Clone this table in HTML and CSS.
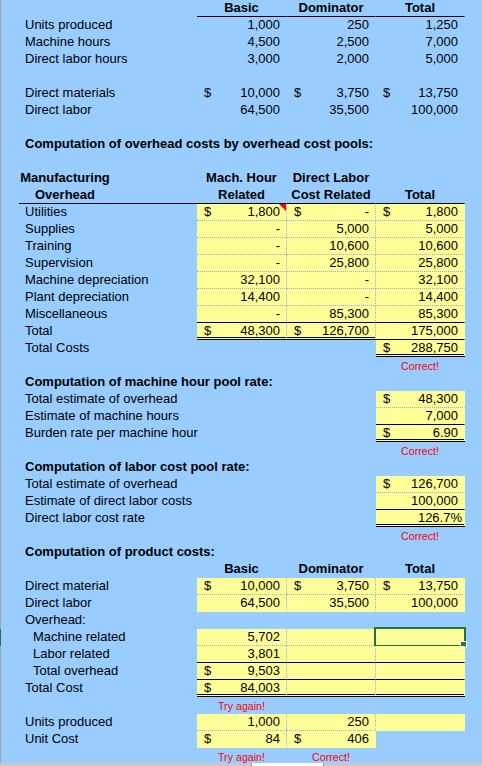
FILE: index.html
```html
<!DOCTYPE html>
<html>
<head>
<meta charset="utf-8">
<link rel="stylesheet" href="styles.css">
</head>
<body>
<div class="sheet">
  <div class="r"><div class="sp"></div><div class="lb"></div><div class="c w90 hd sb">Basic</div><div class="c hd sb">Dominator</div><div class="c hd sb">Total</div></div>
  <div class="r"><div class="sp"></div><div class="lb">Units produced</div><div class="c w90 num"><span>1,000</span></div><div class="c num"><span>250</span></div><div class="c num"><span>1,250</span></div></div>
  <div class="r"><div class="sp"></div><div class="lb">Machine hours</div><div class="c w90 num"><span>4,500</span></div><div class="c num"><span>2,500</span></div><div class="c num"><span>7,000</span></div></div>
  <div class="r"><div class="sp"></div><div class="lb">Direct labor hours</div><div class="c w90 num"><span>3,000</span></div><div class="c num"><span>2,000</span></div><div class="c num"><span>5,000</span></div></div>
  <div class="r"></div>
  <div class="r"><div class="sp"></div><div class="lb">Direct materials</div><div class="c w90"><span>$</span><span>10,000</span></div><div class="c"><span>$</span><span>3,750</span></div><div class="c"><span>$</span><span>13,750</span></div></div>
  <div class="r"><div class="sp"></div><div class="lb">Direct labor</div><div class="c w90 num"><span>64,500</span></div><div class="c num"><span>35,500</span></div><div class="c num"><span>100,000</span></div></div>
  <div class="r"></div>
  <div class="r"><div class="sp"></div><div class="lb bold">Computation of overhead costs by overhead cost pools:</div></div>
  <div class="r"></div>
  <div class="r"><div class="sp"></div><div class="lb nopad"><span class="mh">Manufacturing</span></div><div class="c w90 hd">Mach. Hour</div><div class="c hd">Direct Labor</div><div class="c hd"></div></div>
  <div class="r"><div class="sp"></div><div class="lb nopad sb"><span class="mh">Overhead</span></div><div class="c w90 hd sb">Related</div><div class="c hd sb">Cost Related</div><div class="c hd sb">Total</div></div>
  <div class="r"><div class="sp"></div><div class="lb">Utilities</div><div class="c w90 y dh dv note"><span>$</span><span>1,800</span></div><div class="c y dh dv"><span>$</span><span>-</span></div><div class="c y dh"><span>$</span><span>1,800</span></div></div>
  <div class="r"><div class="sp"></div><div class="lb">Supplies</div><div class="c w90 y dh dv num"><span>-</span></div><div class="c y dh dv num"><span>5,000</span></div><div class="c y dh num"><span>5,000</span></div></div>
  <div class="r"><div class="sp"></div><div class="lb">Training</div><div class="c w90 y dh dv num"><span>-</span></div><div class="c y dh dv num"><span>10,600</span></div><div class="c y dh num"><span>10,600</span></div></div>
  <div class="r"><div class="sp"></div><div class="lb">Supervision</div><div class="c w90 y dh dv num"><span>-</span></div><div class="c y dh dv num"><span>25,800</span></div><div class="c y dh num"><span>25,800</span></div></div>
  <div class="r"><div class="sp"></div><div class="lb">Machine depreciation</div><div class="c w90 y dh dv num"><span>32,100</span></div><div class="c y dh dv num"><span>-</span></div><div class="c y dh num"><span>32,100</span></div></div>
  <div class="r"><div class="sp"></div><div class="lb">Plant depreciation</div><div class="c w90 y dh dv num"><span>14,400</span></div><div class="c y dh dv num"><span>-</span></div><div class="c y dh num"><span>14,400</span></div></div>
  <div class="r"><div class="sp"></div><div class="lb">Miscellaneous</div><div class="c w90 y sb dv num"><span>-</span></div><div class="c y sb dv num"><span>85,300</span></div><div class="c y sb num"><span>85,300</span></div></div>
  <div class="r"><div class="sp"></div><div class="lb">Total</div><div class="c w90 y db dv"><span>$</span><span>48,300</span></div><div class="c y db dv"><span>$</span><span>126,700</span></div><div class="c y sb num"><span>175,000</span></div></div>
  <div class="r"><div class="sp"></div><div class="lb">Total Costs</div><div class="c w90"></div><div class="c"></div><div class="c y db"><span>$</span><span>288,750</span></div></div>
  <div class="r"><div class="sp"></div><div class="lb"></div><div class="c w90"></div><div class="c"></div><div class="c msg ok">Correct!</div></div>
  <div class="r"><div class="sp"></div><div class="lb bold">Computation of machine hour pool rate:</div></div>
  <div class="r"><div class="sp"></div><div class="lb">Total estimate of overhead</div><div class="c w90"></div><div class="c"></div><div class="c y dh"><span>$</span><span>48,300</span></div></div>
  <div class="r"><div class="sp"></div><div class="lb">Estimate of machine hours</div><div class="c w90"></div><div class="c"></div><div class="c y sb num"><span>7,000</span></div></div>
  <div class="r"><div class="sp"></div><div class="lb">Burden rate per machine hour</div><div class="c w90"></div><div class="c"></div><div class="c y db"><span>$</span><span>6.90</span></div></div>
  <div class="r"><div class="sp"></div><div class="lb"></div><div class="c w90"></div><div class="c"></div><div class="c msg ok">Correct!</div></div>
  <div class="r"><div class="sp"></div><div class="lb bold">Computation of labor cost pool rate:</div></div>
  <div class="r"><div class="sp"></div><div class="lb">Total estimate of overhead</div><div class="c w90"></div><div class="c"></div><div class="c y dh"><span>$</span><span>126,700</span></div></div>
  <div class="r"><div class="sp"></div><div class="lb">Estimate of direct labor costs</div><div class="c w90"></div><div class="c"></div><div class="c y sb num"><span>100,000</span></div></div>
  <div class="r"><div class="sp"></div><div class="lb">Direct labor cost rate</div><div class="c w90"></div><div class="c"></div><div class="c y db num pct"><span>126.7%</span></div></div>
  <div class="r"><div class="sp"></div><div class="lb"></div><div class="c w90"></div><div class="c"></div><div class="c msg ok">Correct!</div></div>
  <div class="r"><div class="sp"></div><div class="lb bold">Computation of product costs:</div></div>
  <div class="r"><div class="sp"></div><div class="lb"></div><div class="c w90 hd">Basic</div><div class="c hd">Dominator</div><div class="c hd">Total</div></div>
  <div class="r"><div class="sp"></div><div class="lb">Direct material</div><div class="c w90 y dh dv"><span>$</span><span>10,000</span></div><div class="c y dh dv"><span>$</span><span>3,750</span></div><div class="c y dh"><span>$</span><span>13,750</span></div></div>
  <div class="r"><div class="sp"></div><div class="lb">Direct labor</div><div class="c w90 y dv num"><span>64,500</span></div><div class="c y dv num"><span>35,500</span></div><div class="c y num"><span>100,000</span></div></div>
  <div class="r"><div class="sp"></div><div class="lb">Overhead:</div></div>
  <div class="r rsel"><div class="sp"></div><div class="lb ind">Machine related</div><div class="c w90 y dh dv num"><span>5,702</span></div><div class="c y dh dv"></div><div class="c y sel"></div></div>
  <div class="r"><div class="sp"></div><div class="lb ind">Labor related</div><div class="c w90 y sb dv num"><span>3,801</span></div><div class="c y sb dv"></div><div class="c y sb"></div></div>
  <div class="r"><div class="sp"></div><div class="lb ind">Total overhead</div><div class="c w90 y sb dv"><span>$</span><span>9,503</span></div><div class="c y sb dv"></div><div class="c y sb"></div></div>
  <div class="r"><div class="sp"></div><div class="lb">Total Cost</div><div class="c w90 y db dv"><span>$</span><span>84,003</span></div><div class="c y db dv"></div><div class="c y db"></div></div>
  <div class="r"><div class="sp"></div><div class="lb"></div><div class="c w90 msg bad">Try again!</div></div>
  <div class="r"><div class="sp"></div><div class="lb">Units produced</div><div class="c w90 y dh dv num"><span>1,000</span></div><div class="c y dh dv num"><span>250</span></div><div class="c y"></div></div>
  <div class="r"><div class="sp"></div><div class="lb">Unit Cost</div><div class="c w90 y dv"><span>$</span><span>84</span></div><div class="c y"><span>$</span><span>406</span></div><div class="c"></div></div>
  <div class="r"><div class="sp"></div><div class="lb"></div><div class="c w90 msg bad">Try again!</div><div class="c msg ok">Correct!</div></div>
</div>
<div class="tabbar"><div class="tabgap"></div><div class="tab"></div></div>
</body>
</html>
```
FILE: styles.css
```css
html, body {
  margin: 0;
  padding: 0;
}
body {
  width: 482px;
  height: 766px;
  overflow: hidden;
  background: #99ccff;
  font-family: "Liberation Sans", Arial, sans-serif;
  font-size: 13px;
  color: #000;
}
.sheet {
  display: flex;
  flex-direction: column;
}
.r {
  display: flex;
  height: 17px;
  border-left: 1px solid #a3a3a3;
  box-sizing: border-box;
}
.r.rsel {
  border-left-color: #217346;
}
.sp {
  width: 18px;
  flex: none;
}
.lb {
  width: 178px;
  flex: none;
  box-sizing: border-box;
  padding-left: 6px;
  line-height: 16px;
  white-space: nowrap;
  border-bottom: 1px solid transparent;
}
.lb.ind {
  padding-left: 14px;
}
.lb.nopad {
  padding-left: 0;
}
.bold {
  font-weight: bold;
}
.mh {
  display: inline-block;
  width: 92px;
  text-align: center;
  font-weight: bold;
}
.c {
  width: 89px;
  flex: none;
  box-sizing: border-box;
  display: flex;
  justify-content: space-between;
  padding: 0 6px 0 7px;
  line-height: 16px;
  white-space: nowrap;
  border-right: 1px solid transparent;
  border-bottom: 1px solid transparent;
  position: relative;
}
.c.w90 {
  width: 90px;
}
.c.num {
  justify-content: flex-end;
}
.c.pct {
  padding-right: 2px;
}
.c.hd {
  justify-content: center;
  font-weight: bold;
  padding: 0;
}
.y {
  background: #ffff99;
}
.dv {
  border-right: 1px dotted #8fb3de;
}
.dh {
  border-bottom: 1px dotted #8fb3de;
}
.sb {
  border-bottom: 1px solid #000;
}
.db {
  border-bottom: 3px double #000;
}
.msg {
  justify-content: center;
  padding: 0;
  font-size: 10.67px;
  line-height: 18px;
  color: #ff0000;
}
.note::after {
  content: "";
  position: absolute;
  top: 0;
  right: 0;
  width: 0;
  height: 0;
  border-top: 7px solid #ff0000;
  border-left: 7px solid transparent;
}
.sel::before {
  content: "";
  position: absolute;
  left: -2px;
  top: -2px;
  width: 92px;
  height: 20px;
  box-sizing: border-box;
  border: 2px solid #217346;
}
.sel::after {
  content: "";
  position: absolute;
  left: 84px;
  top: 12px;
  width: 5px;
  height: 5px;
  background: #217346;
  border: 1px solid #ffffff;
}
.tabbar {
  display: flex;
  height: 3px;
  margin-top: -2px;
  background: #c8c8c8;
  position: relative;
}
.tabgap {
  width: 251px;
  flex: none;
}
.tab {
  width: 73px;
  flex: none;
  box-sizing: border-box;
  background: #ffffff;
  border-left: 1px solid #a0a0a0;
  border-right: 1px solid #a0a0a0;
}
```
